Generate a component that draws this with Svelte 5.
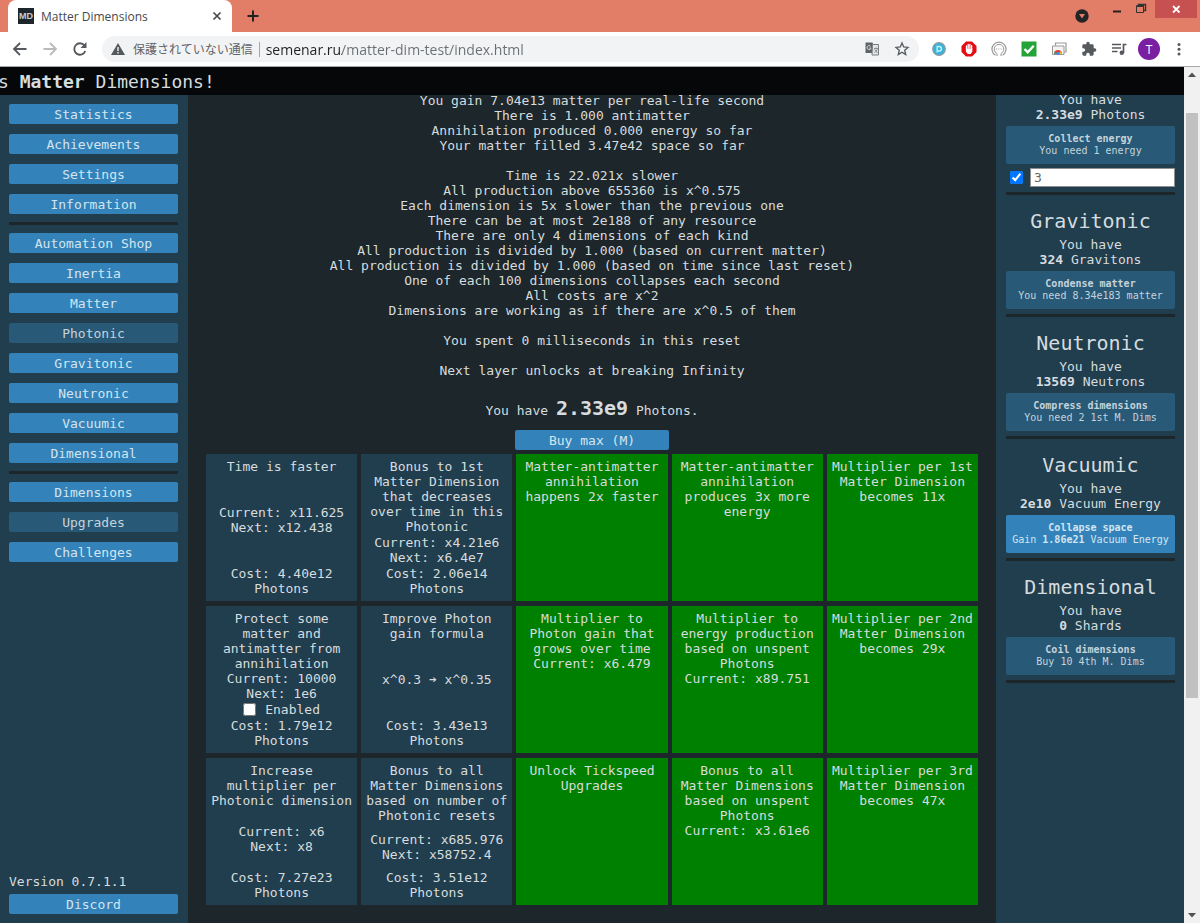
<script lang="ts">
	interface NavItem {
		label: string;
		dim?: boolean;
	}

	interface Upgrade {
		title: string;
		lines?: string[];
		toggle?: string;
		cost?: string;
		bought?: boolean;
	}

	const pages: NavItem[][] = [
		[{ label: 'Statistics' }, { label: 'Achievements' }, { label: 'Settings' }, { label: 'Information' }],
		[
			{ label: 'Automation Shop' },
			{ label: 'Inertia' },
			{ label: 'Matter' },
			{ label: 'Photonic', dim: true },
			{ label: 'Gravitonic' },
			{ label: 'Neutronic' },
			{ label: 'Vacuumic' },
			{ label: 'Dimensional' }
		],
		[{ label: 'Dimensions' }, { label: 'Upgrades', dim: true }, { label: 'Challenges' }]
	];

	const info = [
		[
			'You gain 7.04e13 matter per real-life second',
			'There is 1.000 antimatter',
			'Annihilation produced 0.000 energy so far',
			'Your matter filled 3.47e42 space so far'
		],
		[
			'Time is 22.021x slower',
			'All production above 655360 is x^0.575',
			'Each dimension is 5x slower than the previous one',
			'There can be at most 2e188 of any resource',
			'There are only 4 dimensions of each kind',
			'All production is divided by 1.000 (based on current matter)',
			'All production is divided by 1.000 (based on time since last reset)',
			'One of each 100 dimensions collapses each second',
			'All costs are x^2',
			'Dimensions are working as if there are x^0.5 of them'
		],
		['You spent 0 milliseconds in this reset'],
		['Next layer unlocks at breaking Infinity']
	];

	const upgrades: Upgrade[] = [
		{ title: 'Time is faster', lines: ['Current: x11.625', 'Next: x12.438'], cost: '4.40e12' },
		{
			title: 'Bonus to 1st Matter Dimension that decreases over time in this Photonic',
			lines: ['Current: x4.21e6', 'Next: x6.4e7'],
			cost: '2.06e14'
		},
		{ title: 'Matter-antimatter annihilation happens 2x faster', bought: true },
		{ title: 'Matter-antimatter annihilation produces 3x more energy', bought: true },
		{ title: 'Multiplier per 1st Matter Dimension becomes 11x', bought: true },
		{
			title: 'Protect some matter and antimatter from annihilation',
			lines: ['Current: 10000', 'Next: 1e6'],
			toggle: 'Enabled',
			cost: '1.79e12'
		},
		{ title: 'Improve Photon gain formula', lines: ['x^0.3 ➔ x^0.35'], cost: '3.43e13' },
		{ title: 'Multiplier to Photon gain that grows over time', lines: ['Current: x6.479'], bought: true },
		{
			title: 'Multiplier to energy production based on unspent Photons',
			lines: ['Current: x89.751'],
			bought: true
		},
		{ title: 'Multiplier per 2nd Matter Dimension becomes 29x', bought: true },
		{
			title: 'Increase multiplier per Photonic dimension',
			lines: ['Current: x6', 'Next: x8'],
			cost: '7.27e23'
		},
		{
			title: 'Bonus to all Matter Dimensions based on number of Photonic resets',
			lines: ['Current: x685.976', 'Next: x58752.4'],
			cost: '3.51e12'
		},
		{ title: 'Unlock Tickspeed Upgrades', bought: true },
		{
			title: 'Bonus to all Matter Dimensions based on unspent Photons',
			lines: ['Current: x3.61e6'],
			bought: true
		},
		{ title: 'Multiplier per 3rd Matter Dimension becomes 47x', bought: true }
	];

	const layers = [
		{ name: '', amount: '2.33e9', unit: 'Photons', action: 'Collect energy', need: ['You need 1 energy'] },
		{
			name: 'Gravitonic',
			amount: '324',
			unit: 'Gravitons',
			action: 'Condense matter',
			need: ['You need 8.34e183 matter']
		},
		{
			name: 'Neutronic',
			amount: '13569',
			unit: 'Neutrons',
			action: 'Compress dimensions',
			need: ['You need 2 1st M. Dims']
		},
		{
			name: 'Vacuumic',
			amount: '2e10',
			unit: 'Vacuum Energy',
			action: 'Collapse space',
			need: ['Gain ', '1.86e21', ' Vacuum Energy'],
			ready: true
		},
		{ name: 'Dimensional', amount: '0', unit: 'Shards', action: 'Coil dimensions', need: ['Buy 10 4th M. Dims'] }
	];

	let url = $state('semenar.ru/matter-dim-test/index.html');
	let autoCollect = $state(true);
	let collectAt = $state('3');
	let protect = $state(false);
</script>

<div class="window">
	<div class="tabstrip">
		<div class="tab">
			<svg width="16" height="16" viewBox="0 0 16 16">
				<rect width="16" height="16" fill="#1c262b" />
				<text x="8" y="11" text-anchor="middle" font-size="9" font-weight="bold" font-family="Liberation Sans" fill="#c5ced3">MD</text>
			</svg>
			<span class="tab-title">Matter Dimensions</span>
			<button class="icon small" aria-label="Close tab">
				<svg width="16" height="16" viewBox="0 0 16 16"><path d="M4.500 4.500l7 7M11.500 4.500l-7 7" stroke="#45494d" stroke-width="1.700" /></svg>
			</button>
		</div>
		<button class="icon new-tab" aria-label="New tab">
			<svg width="16" height="16" viewBox="0 0 16 16"><path d="M8 2.500v11M2.500 8h11" stroke="#222" stroke-width="2" /></svg>
		</button>
		<div class="caption">
			<button class="icon search-tabs" aria-label="Search tabs">
				<svg width="14" height="14" viewBox="0 0 14 14"><circle cx="7" cy="7" r="6.700" fill="#222426" /><path d="M4 5h6l-3 4.500z" fill="#e27d67" /></svg>
			</button>
			<button class="icon" aria-label="Minimize">
				<svg width="12" height="18" viewBox="0 0 12 18"><path d="M2 11.500h8" stroke="#222" stroke-width="2" /></svg>
			</button>
			<button class="icon" aria-label="Restore">
				<svg width="12" height="18" viewBox="0 0 12 18" fill="none" stroke="#333"><path d="M1.500 6.500h7v6h-7z" /><path d="M1 6h8M3.500 6v-1.500h7v6h-2" stroke-width="1.400" /></svg>
			</button>
			<button class="icon close" aria-label="Close window">
				<svg width="12" height="18" viewBox="0 0 12 18"><path d="M3 6l6.500 6.500M9.500 6l-6.500 6.500" stroke="#fff" stroke-width="1.800" /></svg>
			</button>
		</div>
	</div>

	<div class="toolbar">
		<div class="history">
			<button class="icon" aria-label="Back">
				<svg width="16" height="16" viewBox="0 0 16 16" fill="none" stroke="#55595d" stroke-width="1.800"><path d="M14.500 8H2.500M8 2L2 8l6 6" /></svg>
			</button>
			<button class="icon" aria-label="Forward">
				<svg width="16" height="16" viewBox="0 0 16 16" fill="none" stroke="#b8babc" stroke-width="1.800"><path d="M1.500 8h12M8 2l6 6-6 6" /></svg>
			</button>
			<button class="icon" aria-label="Reload">
				<svg width="16" height="16" viewBox="0 0 16 16"><path d="M13.300 10a5.700 5.700 0 1 1-.9-5.600" fill="none" stroke="#55595d" stroke-width="1.900" /><path d="M14.500 1v6h-6z" fill="#55595d" /></svg>
			</button>
		</div>
		<div class="omnibox">
			<svg width="14" height="14" viewBox="0 0 14 14"><path d="M7 1l7 12H0z" fill="#55595d" /><path d="M7 5v4M7 10v1.500" stroke="#f1f3f4" stroke-width="1.400" /></svg>
			<span class="insecure">保護されていない通信</span>
			<input class="url" type="text" aria-label="Address" bind:value={url} />
			<button class="icon" aria-label="Translate page">
				<svg width="16" height="16" viewBox="0 0 16 16">
					<path d="M1.500 1.500h7l3.500 10.500H1.500z" fill="#5f6368" />
					<path d="M8.500 3.500H14.500v10.500H8z" fill="#e3e5e7" stroke="#7a7e82" />
					<path d="M6.500 5.200A2 2 0 1 0 7 7H5.300" fill="none" stroke="#d5d8da" />
					<path d="M10 7.500h4M12 6.500v1M13.500 7.500c-.5 2-2 3.500-3 4M10.500 8.500l3 3.500" fill="none" stroke="#8d9195" />
				</svg>
			</button>
			<button class="icon" aria-label="Bookmark this page">
				<svg width="16" height="16" viewBox="0 0 16 16"><path d="M8 2l1.700 4 4.300.4-3.300 2.800 1 4.300L8 11.200l-3.700 2.300 1-4.300L2 6.400 6.300 6z" fill="none" stroke="#55595d" stroke-width="1.300" /></svg>
			</button>
		</div>
		<div class="extensions">
			<button class="icon" aria-label="Player extension">
				<svg width="16" height="16" viewBox="0 0 16 16"><circle cx="8" cy="8" r="6.300" fill="#35b4d8" stroke="#8a9ca3" stroke-width="1.200" /><path d="M6.200 11.500V5.500h2a2 2 0 0 1 0 4.500H7" fill="none" stroke="#c9f1fb" stroke-width="1.400" /></svg>
			</button>
			<button class="icon" aria-label="Ad blocker">
				<svg width="16" height="16" viewBox="0 0 16 16"><path d="M5 .5h6L15.500 5v6L11 15.500H5L.5 11V5z" fill="#e50b14" /><path d="M5.500 8V5M7.200 7V3.500M8.900 7V3.500M10.600 8V4.700" stroke="#fff" stroke-width="1.300" stroke-linecap="round" /><path d="M4.900 7.500h6.400v3L9.800 13H6.700L4.900 10.500z" fill="#fff" /></svg>
			</button>
			<button class="icon" aria-label="Chat extension">
				<svg width="16" height="16" viewBox="0 0 16 16" fill="none" stroke="#999"><path d="M4.500 14.200a7 7 0 1 1 7 0" stroke-width="1.200" /><path d="M6 12.500a4.800 4.800 0 1 1 4 0V15M6 12.500V15" /><path d="M5 8h6" stroke-dasharray="1 1.300" /></svg>
			</button>
			<button class="icon" aria-label="Checker extension">
				<svg width="16" height="16" viewBox="0 0 16 16"><path d="M.5.500h15v15H.5z" fill="#23a338" /><path d="M3.500 8l3.200 3.200 6-6.400" fill="none" stroke="#fff" stroke-width="2.400" /></svg>
			</button>
			<button class="icon" aria-label="Tab manager">
				<svg width="16" height="16" viewBox="0 0 16 16"><path d="M4.500 4.500V2h10.500v9H13" fill="none" stroke="#999" stroke-width="1.200" /><path d="M1.500 5h11.500v8.500H1.500z" fill="#f4f4f4" stroke="#999" /><path d="M3 13a4 4 0 0 1 8 0z" fill="#e0412f" /><path d="M3 13a4 4 0 0 1 1-2.500L7 13z" fill="#36a852" /><path d="M11 13a4 4 0 0 0-1.200-2.700L7 13z" fill="#f9bd17" /><circle cx="7" cy="12.300" r="1.600" fill="#4285f4" /></svg>
			</button>
			<button class="icon" aria-label="Extensions">
				<svg width="16" height="16" viewBox="0 0 24 24"><path d="M20.500 11H19V7a2 2 0 0 0-2-2h-4V3.500a2.500 2.500 0 0 0-5 0V5H4a2 2 0 0 0-2 2v3.800h1.500a2.700 2.700 0 0 1 0 5.400H2V20a2 2 0 0 0 2 2h3.800v-1.500a2.700 2.700 0 0 1 5.400 0V22H17a2 2 0 0 0 2-2v-4h1.500a2.500 2.500 0 0 0 0-5z" fill="#55595d" /></svg>
			</button>
			<button class="icon" aria-label="Media controls">
				<svg width="16" height="16" viewBox="0 0 16 16"><path d="M1 3.500h9M1 7h9M1 10.500h5.500M12.500 12V3.500h3" fill="none" stroke="#55595d" stroke-width="1.700" /><circle cx="10.800" cy="11.800" r="2.200" fill="#55595d" /></svg>
			</button>
			<button class="icon avatar" aria-label="Profile">T</button>
			<button class="icon" aria-label="Menu">
				<svg width="16" height="16" viewBox="0 0 16 16" fill="#55595d"><circle cx="8" cy="3.500" r="1.500" /><circle cx="8" cy="8.300" r="1.500" /><circle cx="8" cy="13.100" r="1.500" /></svg>
			</button>
		</div>
	</div>

	<div class="viewport">
		<div class="game">
			<header class="news"><p>s <b>Matter</b> Dimensions!</p></header>
			<div class="columns">
				<nav class="sidebar">
					{#each pages as group}
						<div class="nav-group">
							{#each group as item (item.label)}
								<button class="btn" class:dim={item.dim}>{item.label}</button>
							{/each}
						</div>
						{#if group !== pages[pages.length - 1]}<hr />{/if}
					{/each}
					<div class="about">
						<span>Version 0.7.1.1</span>
						<button class="btn">Discord</button>
					</div>
				</nav>

				<main>
					<div class="info">
						{#each info as block}
							<div>
								{#each block as line}
									<p>{line}</p>
								{/each}
							</div>
						{/each}
					</div>
					<p class="balance">You have <b>2.33e9</b> Photons.</p>
					<button class="btn buy-max">Buy max (M)</button>
					<div class="upgrades">
						{#each upgrades as up (up.title)}
							<div class="upgrade" class:bought={up.bought}>
								<p>{up.title}</p>
								{#if up.lines}
									<div>
										{#each up.lines as line}
											<p>{line}</p>
										{/each}
										{#if up.toggle}
											<label><input type="checkbox" bind:checked={protect} />{up.toggle}</label>
										{/if}
									</div>
								{/if}
								{#if up.cost}
									<p>Cost: {up.cost} Photons</p>
								{/if}
							</div>
						{/each}
					</div>
				</main>

				<aside>
					{#each layers as layer (layer.unit)}
						<section>
							{#if layer.name}<h2>{layer.name}</h2>{/if}
							<p>You have</p>
							<p><b>{layer.amount}</b> {layer.unit}</p>
							<button class="btn reset" class:dim={!layer.ready}>
								<b>{layer.action}</b>
								<span>{#each layer.need as part, i}{#if i === 1}<b>{part}</b>{:else}{part}{/if}{/each}</span>
							</button>
							{#if !layer.name}
								<div class="auto">
									<input type="checkbox" aria-label="Collect automatically" bind:checked={autoCollect} />
									<input type="text" aria-label="Collect at" bind:value={collectAt} />
								</div>
							{/if}
							<hr />
						</section>
					{/each}
				</aside>
			</div>
		</div>

		<div class="scrollbar">
			<svg width="16" height="16" viewBox="0 0 16 16"><path d="M8 5.500l4 4.500H4z" fill="#505050" /></svg>
			<div class="track">
				<div class="above"></div>
				<div class="thumb"></div>
				<div class="below"></div>
			</div>
			<svg width="16" height="16" viewBox="0 0 16 16"><path d="M8 10.500L4 6h8z" fill="#505050" /></svg>
		</div>
	</div>
</div>

<style>
	:global(body) {
		margin: 0;
	}

	.window {
		display: flex;
		flex-direction: column;
		height: 100vh;
		overflow: hidden;
		font-family: 'Open Sans', 'Noto Sans CJK JP', sans-serif;
		background: #fff;
	}

	p,
	h2 {
		margin: 0;
		font-weight: normal;
	}

	.icon {
		display: flex;
		align-items: center;
		justify-content: center;
		flex-shrink: 0;
		padding: 0;
		border: none;
		background: none;
		cursor: pointer;
	}

	/* browser chrome */
	.tabstrip {
		display: flex;
		align-items: center;
		height: 32px;
		flex-shrink: 0;
		padding-left: 8px;
		background: #e27d67;
	}

	.tab {
		display: flex;
		align-items: center;
		align-self: stretch;
		box-sizing: border-box;
		width: 224px;
		padding: 0 7px 0 10px;
		gap: 7px;
		border-radius: 8px 8px 0 0;
		background: #fff;
	}

	.tab-title {
		flex: 1;
		font-size: 12px;
		color: #45494d;
	}

	.new-tab {
		margin-left: 13px;
	}

	.caption {
		display: flex;
		align-self: flex-start;
		margin-left: auto;
		margin-right: 3px;
		gap: 12px;
	}

	.search-tabs {
		height: 32px;
		margin-right: 10px;
	}

	.caption .icon:not(.search-tabs) {
		height: 18px;
	}

	.caption .close {
		width: 42px;
		margin-left: -4px;
		background: #c75050;
	}

	.toolbar {
		display: flex;
		align-items: center;
		height: 34px;
		flex-shrink: 0;
		padding: 0 13px 0 12px;
		border-bottom: 1px solid #a5a8ab;
	}

	.history {
		display: flex;
		gap: 14px;
		margin-right: 14px;
	}

	.omnibox {
		display: flex;
		align-items: center;
		flex: 1;
		height: 26px;
		padding: 0 9px;
		gap: 14px;
		border-radius: 13px;
		background: #f1f3f4;
	}

	.insecure {
		margin-left: -6px;
		padding-right: 6px;
		border-right: 1px solid #a5a8ab;
		font-size: 12px;
		line-height: 15px;
		white-space: nowrap;
		color: #5f6368;
	}

	/* host name is darker than the path */
	.url {
		flex: 1;
		min-width: 0;
		margin-left: -8px;
		padding: 0;
		border: none;
		outline: none;
		font: 14px 'Open Sans', sans-serif;
		color: #5f6368;
		background: linear-gradient(90deg, #202124 76px, #6a6e72 76px);
		background-clip: text;
		-webkit-text-fill-color: transparent;
	}

	.extensions {
		display: flex;
		align-items: center;
		gap: 14px;
		margin-left: 12px;
	}

	.avatar {
		width: 22px;
		height: 22px;
		margin: 0 -3px;
		border-radius: 50%;
		background: #7b1fa2;
		color: #fff;
		font: 12px 'Open Sans', sans-serif;
	}

	/* game page */
	.viewport {
		display: flex;
		flex: 1;
		min-height: 0;
	}

	.game {
		display: flex;
		flex-direction: column;
		flex: 1;
		min-width: 0;
		background: #1c262b;
		color: #d6dcdf;
		font: 13px/15px 'DejaVu Sans Mono', monospace;
	}

	.news {
		flex-shrink: 0;
		overflow: hidden;
		background: #060709;
		font-size: 18px;
		line-height: 28px;
	}

	.news p {
		margin-left: -2px;
		padding-top: 1px;
		height: 27px;
		white-space: nowrap;
	}

	.columns {
		display: flex;
		flex: 1;
		min-height: 0;
		overflow: hidden;
	}

	.btn {
		display: block;
		width: 100%;
		height: 20px;
		padding: 0;
		border: none;
		border-radius: 2px;
		background: #3383ba;
		color: #d3e5f0;
		font: inherit;
		cursor: pointer;
	}

	.btn.dim {
		background: #285977;
		color: #c5d3db;
	}

	hr {
		width: 100%;
		height: 3px;
		margin: 8px 0;
		border: none;
		background: #1c262b;
	}

	.sidebar,
	aside {
		box-sizing: border-box;
		flex: 0 0 188px;
		min-width: 0;
		background: #213e4e;
	}

	.sidebar {
		display: flex;
		flex-direction: column;
		padding: 9px 10px 9px 9px;
	}

	.nav-group {
		display: flex;
		flex-direction: column;
		gap: 10px;
	}

	.about {
		display: flex;
		flex-direction: column;
		gap: 5px;
		margin-top: auto;
	}

	main {
		flex: 1;
		min-width: 0;
		margin-top: -2px;
		padding: 0 18px;
		text-align: center;
	}

	.info {
		display: flex;
		flex-direction: column;
		gap: 15px;
	}

	.balance {
		margin: 18px 0 7px;
		line-height: 25px;
	}

	.balance b {
		font-size: 20px;
	}

	.buy-max {
		width: 20%;
		margin: 0 auto 4px;
	}

	.upgrades {
		display: grid;
		grid-template-columns: repeat(5, 1fr);
		gap: 5px 4px;
	}

	.upgrade {
		display: flex;
		flex-direction: column;
		justify-content: space-between;
		box-sizing: border-box;
		min-height: 147px;
		padding: 5px 4px;
		background: #213e4e;
	}

	.upgrade.bought {
		justify-content: flex-start;
		background: #008000;
	}

	.upgrade label {
		display: flex;
		align-items: center;
		justify-content: center;
		gap: 9px;
		height: 17px;
	}

	input[type='checkbox'] {
		width: 13px;
		height: 13px;
		margin: 0;
	}

	aside {
		padding: 0 9px 0 10px;
		text-align: center;
	}

	aside section:first-child {
		margin-top: -3px;
	}

	h2 {
		padding: 13px 0 3px;
		font-size: 20px;
		line-height: 26px;
	}

	aside hr {
		margin: 5px 0 0;
	}

	.reset {
		height: 38px;
		margin-top: 4px;
		font-size: 10px;
		line-height: 12px;
	}

	.reset > b,
	.reset > span {
		display: block;
		white-space: nowrap;
	}

	.auto {
		display: flex;
		align-items: center;
		gap: 7px;
		margin-top: 4px;
		padding-left: 4px;
	}

	.auto input[type='text'] {
		flex: 1;
		box-sizing: border-box;
		min-width: 0;
		height: 19px;
		padding: 0 3px;
		border: 1px solid #8f8f8f;
		background: #fff;
		color: #666;
		font: inherit;
	}

	.scrollbar {
		display: flex;
		flex-direction: column;
		flex: 0 0 16px;
		background: #f1f1f1;
	}

	.track {
		display: flex;
		flex-direction: column;
		flex: 1;
		padding: 0 2px;
	}

	.above {
		flex: 30;
	}

	.thumb {
		flex: 585;
		background: #c1c1c1;
	}

	.below {
		flex: 209;
	}
</style>
